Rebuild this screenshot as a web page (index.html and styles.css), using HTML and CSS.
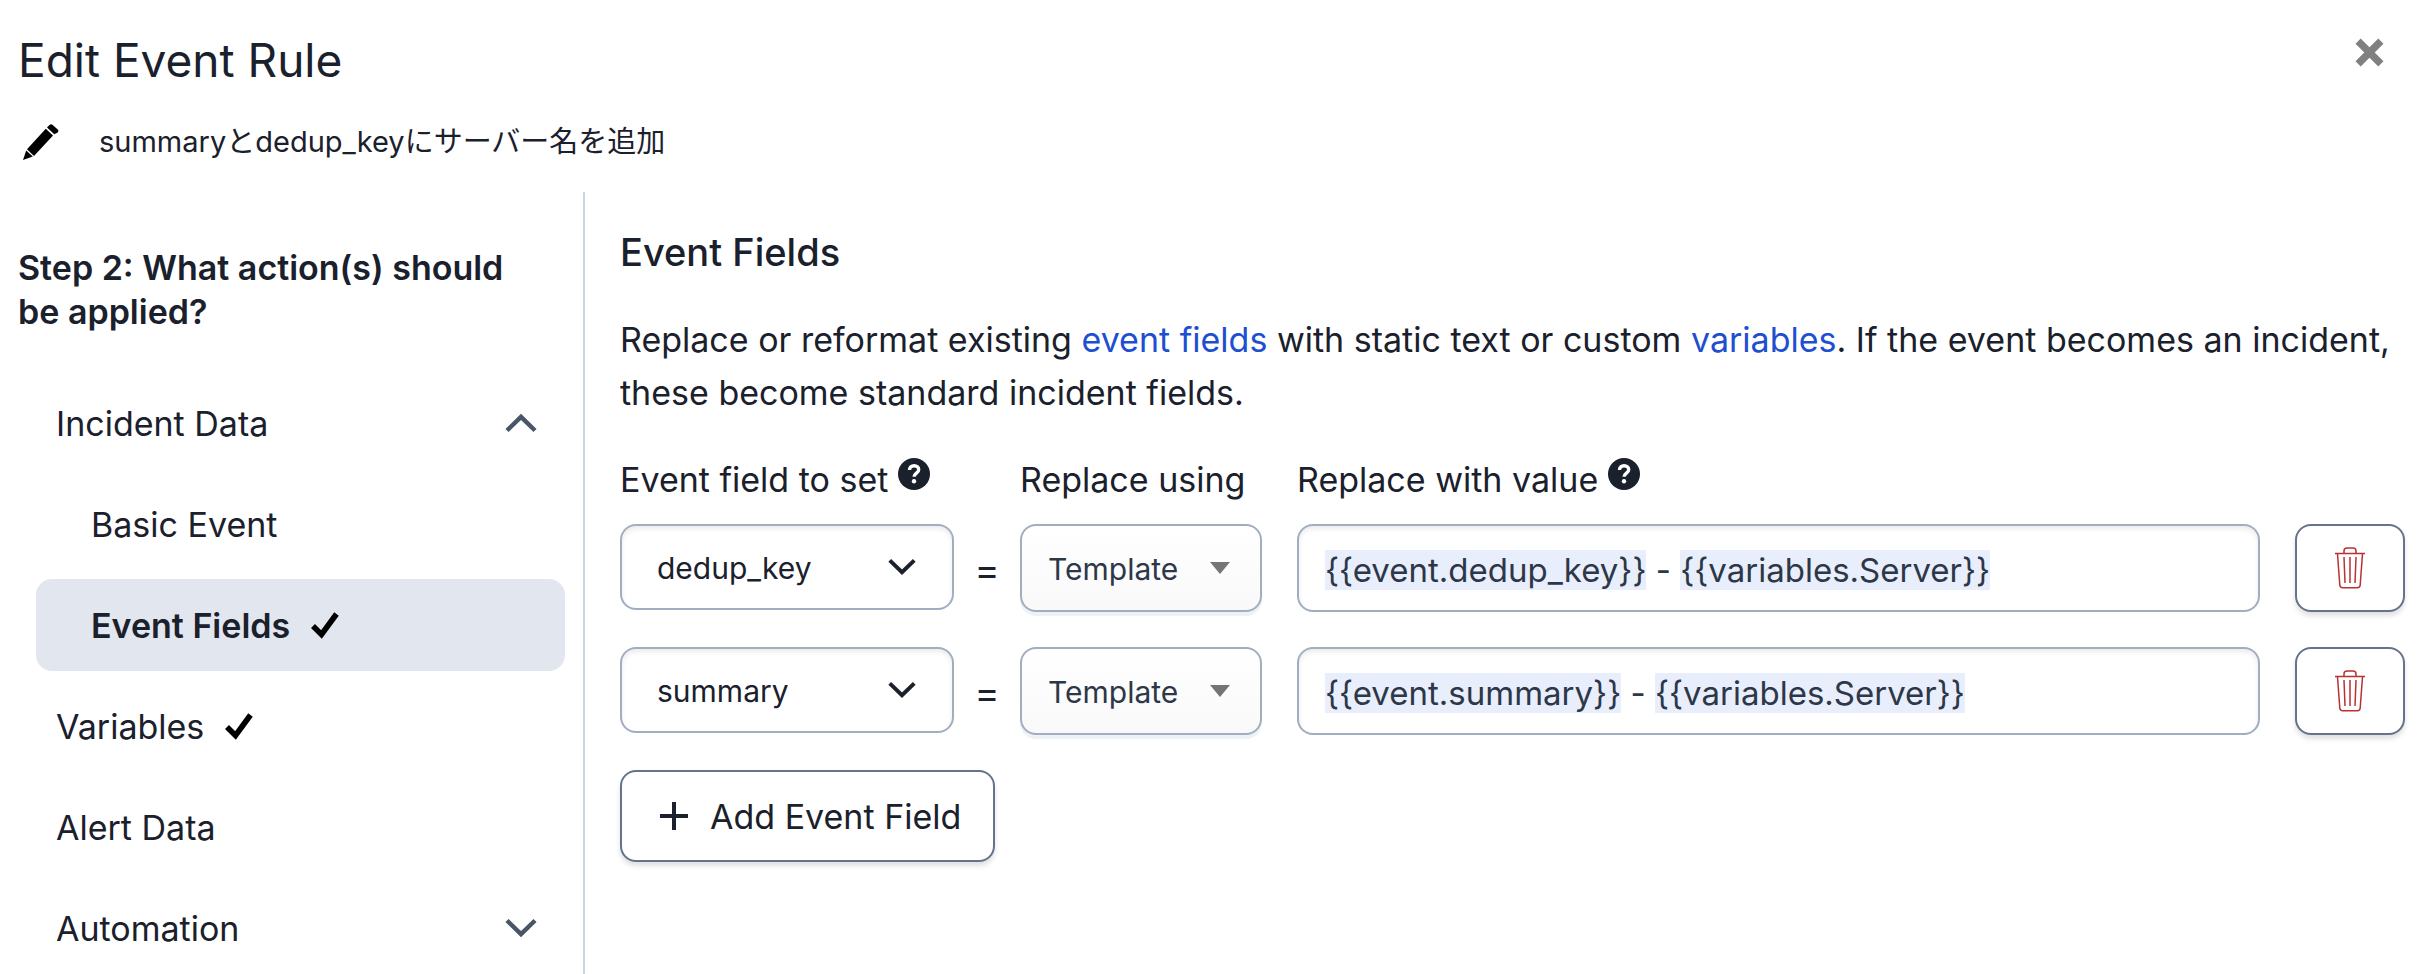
FILE: index.html
```html
<!DOCTYPE html>
<html lang="en">
<head>
<meta charset="utf-8">
<title>Edit Event Rule</title>
<link rel="stylesheet" href="styles.css">
</head>
<body>
<svg class="sprite" aria-hidden="true">
  <symbol id="check" viewBox="0 0 30 28"><path d="M3 15 11.500 23.500 26.500 3" fill="none" stroke="currentColor" stroke-width="5.600"/></symbol>
  <symbol id="chevron" viewBox="0 0 32 20"><path d="M2 2.500 16 16 30 2.500" fill="none" stroke="currentColor" stroke-width="4.500"/></symbol>
  <symbol id="caret" viewBox="0 0 20 12"><path d="M0 0h20L10 12z" fill="currentColor"/></symbol>
  <symbol id="help" viewBox="0 0 32 32"><circle cx="16" cy="16" r="16" fill="currentColor"/><path d="M11.500 12c0-2.700 2-4.300 4.600-4.300 2.700 0 4.600 1.600 4.600 4 0 3.300-4.600 3.500-4.600 7" fill="none" stroke="#fff" stroke-width="3.400"/><circle cx="16" cy="23.300" r="2.200" fill="#fff"/></symbol>
  <symbol id="trash" viewBox="0 0 30 42"><g fill="none" stroke="currentColor" stroke-width="1.500"><path d="M0 6.500h30M9 6V4q0-3 3-3h6q3 0 3 3v2M2.500 7l2.300 31q.2 2.800 3 2.800h14.400q2.800 0 3-2.800L27.500 7M15 10v26M9 10l1 26M21 10l-1 26"/></g></symbol>
</svg>

<header class="header">
  <div class="title-row">
    <h1 class="title">Edit Event Rule</h1>
    <button class="close" type="button" aria-label="Close">
      <svg class="close-icon" viewBox="0 0 28 28"><path d="M3 3 25 25M25 3 3 25" stroke="currentColor" stroke-width="7"/></svg>
    </button>
  </div>
  <div class="rule-name">
    <button class="edit" type="button" aria-label="Edit name">
      <svg class="edit-icon" viewBox="0 0 36 36"><path d="M0 36 3.200 26.500 9.800 32.500z"/><path d="M4 25.300 22.800 4.800 30 11.500 11 32z"/><path d="M24 3.600 26.500.9q1.500-1.500 3.200 0l4.800 4.400q1.600 1.600.2 3.200L31.300 10.300z"/></svg>
    </button>
    <span>summaryとdedup_keyにサーバー名を追加</span>
  </div>
</header>

<div class="layout">
  <aside class="sidebar">
    <h2 class="step">Step 2: What action(s) should be applied?</h2>
    <nav class="nav">
      <button class="nav-item" type="button" aria-expanded="true">Incident Data<svg class="nav-chevron up"><use href="#chevron"/></svg></button>
      <button class="nav-item sub" type="button">Basic Event</button>
      <button class="nav-item sub active" type="button" aria-current="page">Event Fields<svg class="check"><use href="#check"/></svg></button>
      <button class="nav-item" type="button">Variables<svg class="check"><use href="#check"/></svg></button>
      <button class="nav-item" type="button">Alert Data</button>
      <button class="nav-item" type="button" aria-expanded="false">Automation<svg class="nav-chevron"><use href="#chevron"/></svg></button>
    </nav>
  </aside>

  <main class="content">
    <h2 class="section-title">Event Fields</h2>
    <p class="intro">Replace or reformat existing <a href="#fields">event fields</a> with static text or custom <a href="#variables">variables</a>. If the event becomes an incident, these become standard incident fields.</p>

    <div class="row labels">
      <div class="setter">
        <span class="label" id="l-field">Event field to set<svg class="help"><use href="#help"/></svg></span>
        <span class="label" id="l-using">Replace using</span>
      </div>
      <span class="label" id="l-value">Replace with value<svg class="help"><use href="#help"/></svg></span>
    </div>

    <div class="row">
      <div class="setter">
        <div class="picker"><select class="select" aria-labelledby="l-field"><option>dedup_key</option></select><svg class="picker-chevron"><use href="#chevron"/></svg></div>
        <span class="equals">=</span>
        <div class="picker"><select class="select mode" aria-labelledby="l-using"><option>Template</option></select><svg class="picker-caret"><use href="#caret"/></svg></div>
      </div>
      <div class="value" role="textbox" contenteditable="true" spellcheck="false" aria-labelledby="l-value"><span class="token">{{event.dedup_key}}</span> - <span class="token">{{variables.Server}}</span></div>
      <button class="delete" type="button" aria-label="Delete dedup_key"><svg class="trash"><use href="#trash"/></svg></button>
    </div>

    <div class="row">
      <div class="setter">
        <div class="picker"><select class="select" aria-labelledby="l-field"><option>summary</option></select><svg class="picker-chevron"><use href="#chevron"/></svg></div>
        <span class="equals">=</span>
        <div class="picker"><select class="select mode" aria-labelledby="l-using"><option>Template</option></select><svg class="picker-caret"><use href="#caret"/></svg></div>
      </div>
      <div class="value" role="textbox" contenteditable="true" spellcheck="false" aria-labelledby="l-value"><span class="token">{{event.summary}}</span> - <span class="token">{{variables.Server}}</span></div>
      <button class="delete" type="button" aria-label="Delete summary"><svg class="trash"><use href="#trash"/></svg></button>
    </div>

    <button class="add" type="button"><svg class="plus" viewBox="0 0 28 28"><path d="M14 0v28M0 14h28" stroke="currentColor" stroke-width="4"/></svg>Add Event Field</button>
  </main>
</div>
</body>
</html>
```
FILE: styles.css
```css
* { box-sizing: border-box; }
body {
  margin: 0;
  min-height: 100vh;
  display: flex;
  flex-direction: column;
  background: #fff;
  color: #1a202c;
  font-family: Inter, "Noto Sans CJK JP", sans-serif;
  font-size: 34px;
}
h1, h2, p { margin: 0; }
button, select { font: inherit; color: inherit; margin: 0; }
button { cursor: pointer; }
svg { flex: none; }
.sprite { position: absolute; width: 0; height: 0; }

.header { padding: 31px 34px 0 18px; }
.title-row { display: flex; justify-content: space-between; align-items: flex-start; }
.title { font-size: 46px; font-weight: 400; line-height: 58px; }
.close { padding: 7px 0; border: 0; background: none; color: #808080; display: flex; }
.close-icon { width: 29px; height: 29px; }
.rule-name {
  display: flex;
  align-items: center;
  gap: 40px;
  height: 103px;
  padding: 0 0 4px 2px;
  font-size: 29px;
}
.edit { padding: 6px 0 0 3px; border: 0; background: none; display: flex; }
.edit-icon { width: 36px; height: 36px; fill: #000; }

.layout { flex: 1; display: flex; }
.sidebar { flex: none; width: 585px; border-right: 2px solid #cbd5e0; padding: 54px 18px 0 18px; }
.step { padding-right: 48px; font-size: 34px; font-weight: 600; line-height: 44px; }
.nav { display: flex; flex-direction: column; gap: 9px; margin-top: 43px; padding-left: 18px; }
.nav-item {
  display: flex;
  align-items: center;
  gap: 20px;
  height: 92px;
  padding: 0 28px 0 20px;
  border: 0;
  border-radius: 16px;
  background: none;
  text-align: left;
}
.sub { padding-left: 55px; }
.active { background: #e2e6ee; font-weight: 600; }
.check { width: 30px; height: 28px; color: #000; }
.nav-chevron { width: 32px; height: 20px; margin-left: auto; color: #4a5568; }
.up { transform: rotate(180deg); }

.content { flex: 1; min-width: 0; padding: 36px 13px 0 35px; }
.section-title { font-size: 38px; font-weight: 500; line-height: 48px; }
.intro { margin-top: 37px; line-height: 53px; }
.intro a { color: #1d4fd0; text-decoration: none; }

.row {
  display: grid;
  grid-template-columns: 642px 1fr 110px;
  gap: 35px;
  margin-bottom: 35px;
}
.labels { margin: 39px 0 22px; }
.setter { display: grid; grid-template-columns: 400px 242px; }
.row:not(.labels) .setter { grid-template-columns: 334px 66px 242px; align-items: start; }
.label { display: flex; gap: 10px; line-height: 44px; white-space: nowrap; }
.help { width: 32px; height: 32px; }
.equals { height: 88px; font-size: 38px; line-height: 90px; text-align: center; }

.picker { display: grid; align-items: center; }
.picker > * { grid-area: 1 / 1; }
.select {
  appearance: none;
  width: 100%;
  height: 86px;
  padding: 2px 35px 0;
  border: 2px solid #a0aec0;
  border-radius: 16px;
  background: #fff;
  box-shadow: inset 0 3px 5px rgba(0, 0, 0, .08);
  font-size: 30px;
}
.mode {
  height: 88px;
  padding: 2px 26px 0;
  background: linear-gradient(#fff, #f9f9f9);
  box-shadow: 0 4px 1px #edf2f7;
  color: #2d3748;
}
.picker-chevron, .picker-caret { justify-self: end; pointer-events: none; }
.picker-chevron { width: 28px; height: 18px; margin-right: 38px; }
.picker-caret { width: 20px; height: 12px; margin-right: 32px; color: #757575; }

.value {
  height: 88px;
  padding: 2px 26px 0;
  border: 2px solid #a0aec0;
  border-radius: 16px;
  box-shadow: inset 0 3px 5px rgba(0, 0, 0, .08);
  color: #2d3748;
  font-size: 33px;
  line-height: 84px;
  white-space: nowrap;
  overflow: hidden;
}
.token { background: #e8eefc; }
.delete, .add {
  display: flex;
  align-items: center;
  justify-content: center;
  border: 2px solid #64748b;
  border-radius: 16px;
  background: #fff;
  box-shadow: 0 4px 5px rgba(0, 0, 0, .12);
}
.delete { height: 88px; color: #b83232; }
.trash { width: 30px; height: 42px; }
.add { gap: 22px; height: 92px; padding: 0 32px 0 38px; }
.plus { width: 28px; height: 28px; }
```
